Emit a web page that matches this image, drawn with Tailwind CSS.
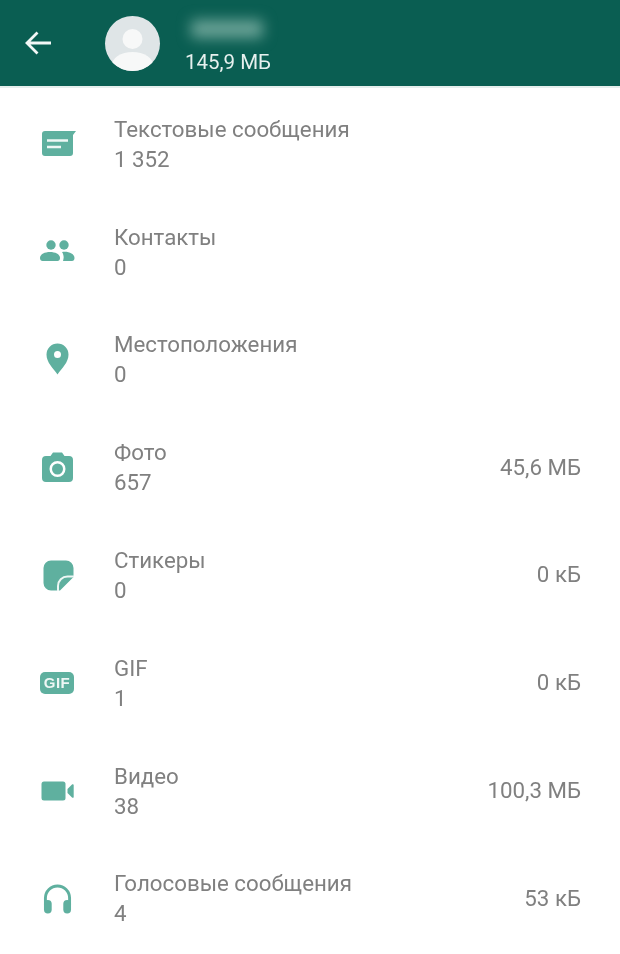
<!DOCTYPE html>
<html><head><meta charset="utf-8">
<script src="https://cdn.jsdelivr.net/npm/@tailwindcss/browser@4"></script>
</head>
<body class="bg-white">
<div class="w-[620px] h-[954px] overflow-hidden bg-white font-['Roboto',sans-serif] text-[#808080]">
  <header class="h-[88px] bg-[#0a5e52] flex items-start text-white border-b-2 border-[#e6efed] blur-[0.4px]">
    <svg class="ml-[24px] mt-[29px] w-[28px] h-[28px]" viewBox="0 0 28 28" fill="none" stroke="#f2f7f6" stroke-width="2.800"><path d="M27 14H3M13.500 3.500 3 14l10.500 10.500"/></svg>
    <div class="ml-[53px] mt-[16px] w-[55px] h-[55px] rounded-full bg-[#dfe5e7] overflow-hidden">
      <svg viewBox="0 0 55 55" class="w-full h-full"><circle cx="27.500" cy="23" r="10" fill="#f7f8f8"/><ellipse cx="27.500" cy="50" rx="21" ry="14" fill="#f7f8f8"/></svg>
    </div>
    <div class="ml-[25px] flex flex-col">
      <div class="w-[72px] h-[18px] ml-[6px] mt-[20px] bg-[#6ba397] blur-[7px] rounded-sm"></div>
      <div class="mt-[12px] text-[20.500px] leading-[24px] text-[#e6f0ee]">145,9 МБ</div>
    </div>
  </header>
  <main class="pt-[2px] blur-[0.4px]">
    <div class="h-[107.8px] flex items-center pl-[40px] pr-[39px]">
      <div class="w-[74px] shrink-0"><svg class="ml-[1px] w-[36px] h-[30px]" viewBox="0 0 36 30"><path d="M4 2h31l-3 4v18a3 3 0 0 1-3 3H4a3 3 0 0 1-3-3V5a3 3 0 0 1 3-3z" fill="#5fb09f"/><path d="M6 11.500h21M6 18h14" stroke="#eef7f5" stroke-width="2.500"/></svg></div>
      <div class="grow"><div class="text-[22.300px] leading-[30px]">Текстовые сообщения</div><div class="text-[22.300px] leading-[30px]">1 352</div></div>
    </div>
    <div class="h-[107.8px] flex items-center pl-[40px] pr-[39px]">
      <div class="w-[74px] shrink-0"><svg class="w-[35px] h-[23px]" viewBox="0 0 35 23"><circle cx="11" cy="5" r="4.700" fill="#5fb09f"/><circle cx="24" cy="5" r="4.700" fill="#5fb09f"/><path d="M0 18c0-4 5-6 10-6s10 2 10 6c0 2-1 3-2.500 3h-15C1 21 0 20 0 18z" fill="#5fb09f"/><path d="M22 12c6-1 12.500 1.500 12.500 6 0 2-1 3-2.500 3h-9c1-3 1-6-1-9z" fill="#5fb09f"/></svg></div>
      <div class="grow"><div class="text-[22.300px] leading-[30px]">Контакты</div><div class="text-[22.300px] leading-[30px]">0</div></div>
    </div>
    <div class="h-[107.8px] flex items-center pl-[40px] pr-[39px]">
      <div class="w-[74px] shrink-0"><svg class="ml-[6px] w-[23px] h-[32px]" viewBox="0 0 23 32"><path fill-rule="evenodd" d="M11.500 31.500C7 25 .5 19.500.5 11.500a11 11 0 0 1 22 0c0 8-6.500 13.500-11 20zM11.500 8a3.500 3.500 0 1 0 0 7 3.500 3.500 0 0 0 0-7z" fill="#5fb09f"/></svg></div>
      <div class="grow"><div class="text-[22.300px] leading-[30px]">Местоположения</div><div class="text-[22.300px] leading-[30px]">0</div></div>
    </div>
    <div class="h-[107.8px] flex items-center pl-[40px] pr-[39px]">
      <div class="w-[74px] shrink-0"><svg class="ml-[2px] w-[31px] h-[30px]" viewBox="0 0 31 30"><path fill-rule="evenodd" d="M4 4h4.500L11 .5h9L22.500 4H27a4 4 0 0 1 4 4v18a4 4 0 0 1-4 4H4a4 4 0 0 1-4-4V8a4 4 0 0 1 4-4zm11.500 5a8 8 0 1 0 0 16 8 8 0 0 0 0-16z" fill="#5fb09f"/><circle cx="15.500" cy="17" r="5.500" fill="#5fb09f"/></svg></div>
      <div class="grow"><div class="text-[22.300px] leading-[30px]">Фото</div><div class="text-[22.300px] leading-[30px]">657</div></div>
      <div class="text-[22.300px]">45,6 МБ</div>
    </div>
    <div class="h-[107.8px] flex items-center pl-[40px] pr-[39px]">
      <div class="w-[74px] shrink-0"><svg class="ml-[3px] w-[31px] h-[31px]" viewBox="0 0 31 31"><path d="M8 .5h15a7.500 7.500 0 0 1 7.500 7.500v9L17 30.500H8A7.500 7.500 0 0 1 .5 23V8A7.500 7.500 0 0 1 8 .5z" fill="#5fb09f"/><path d="M15 31v-5a9.500 9.500 0 0 1 9.500-9.500H31" fill="none" stroke="#eef7f5" stroke-width="2"/><path d="M18 28v-2a6.500 6.500 0 0 1 6.500-6.500H27z" fill="#5fb09f"/></svg></div>
      <div class="grow"><div class="text-[22.300px] leading-[30px]">Стикеры</div><div class="text-[22.300px] leading-[30px]">0</div></div>
      <div class="text-[22.300px]">0 кБ</div>
    </div>
    <div class="h-[107.8px] flex items-center pl-[40px] pr-[39px]">
      <div class="w-[74px] shrink-0"><div class="w-[34px] h-[22px] rounded-[5px] bg-[#5fb09f] text-[#eef7f5] text-[15px] leading-[22px] font-bold text-center tracking-[0.5px] font-['Liberation_Sans',sans-serif]">GIF</div></div>
      <div class="grow"><div class="text-[22.300px] leading-[30px]">GIF</div><div class="text-[22.300px] leading-[30px]">1</div></div>
      <div class="text-[22.300px]">0 кБ</div>
    </div>
    <div class="h-[107.8px] flex items-center pl-[40px] pr-[39px]">
      <div class="w-[74px] shrink-0"><svg class="ml-[1px] w-[33px] h-[20px]" viewBox="0 0 33 20"><rect x="0.500" y="0.500" width="24" height="19" rx="2.500" fill="#5fb09f"/><path d="M26.500 8l4.500-4.500c.7-.6 1.700-.3 1.700.6v11.800c0 .9-1 1.200-1.700.6L26.500 12z" fill="#5fb09f"/></svg></div>
      <div class="grow"><div class="text-[22.300px] leading-[30px]">Видео</div><div class="text-[22.300px] leading-[30px]">38</div></div>
      <div class="text-[22.300px]">100,3 МБ</div>
    </div>
    <div class="h-[107.8px] flex items-center pl-[40px] pr-[39px]">
      <div class="w-[74px] shrink-0"><svg class="ml-[3px] w-[29px] h-[31px]" viewBox="0 0 30 31"><path d="M2.500 22V15a12.500 12.500 0 0 1 25 0v7" fill="none" stroke="#5fb09f" stroke-width="3"/><rect x="1" y="17" width="8" height="14" rx="4" fill="#5fb09f"/><rect x="21" y="17" width="8" height="14" rx="4" fill="#5fb09f"/></svg></div>
      <div class="grow"><div class="text-[22.300px] leading-[30px]">Голосовые сообщения</div><div class="text-[22.300px] leading-[30px]">4</div></div>
      <div class="text-[22.300px]">53 кБ</div>
    </div>
  </main>
</div>
</body></html>
